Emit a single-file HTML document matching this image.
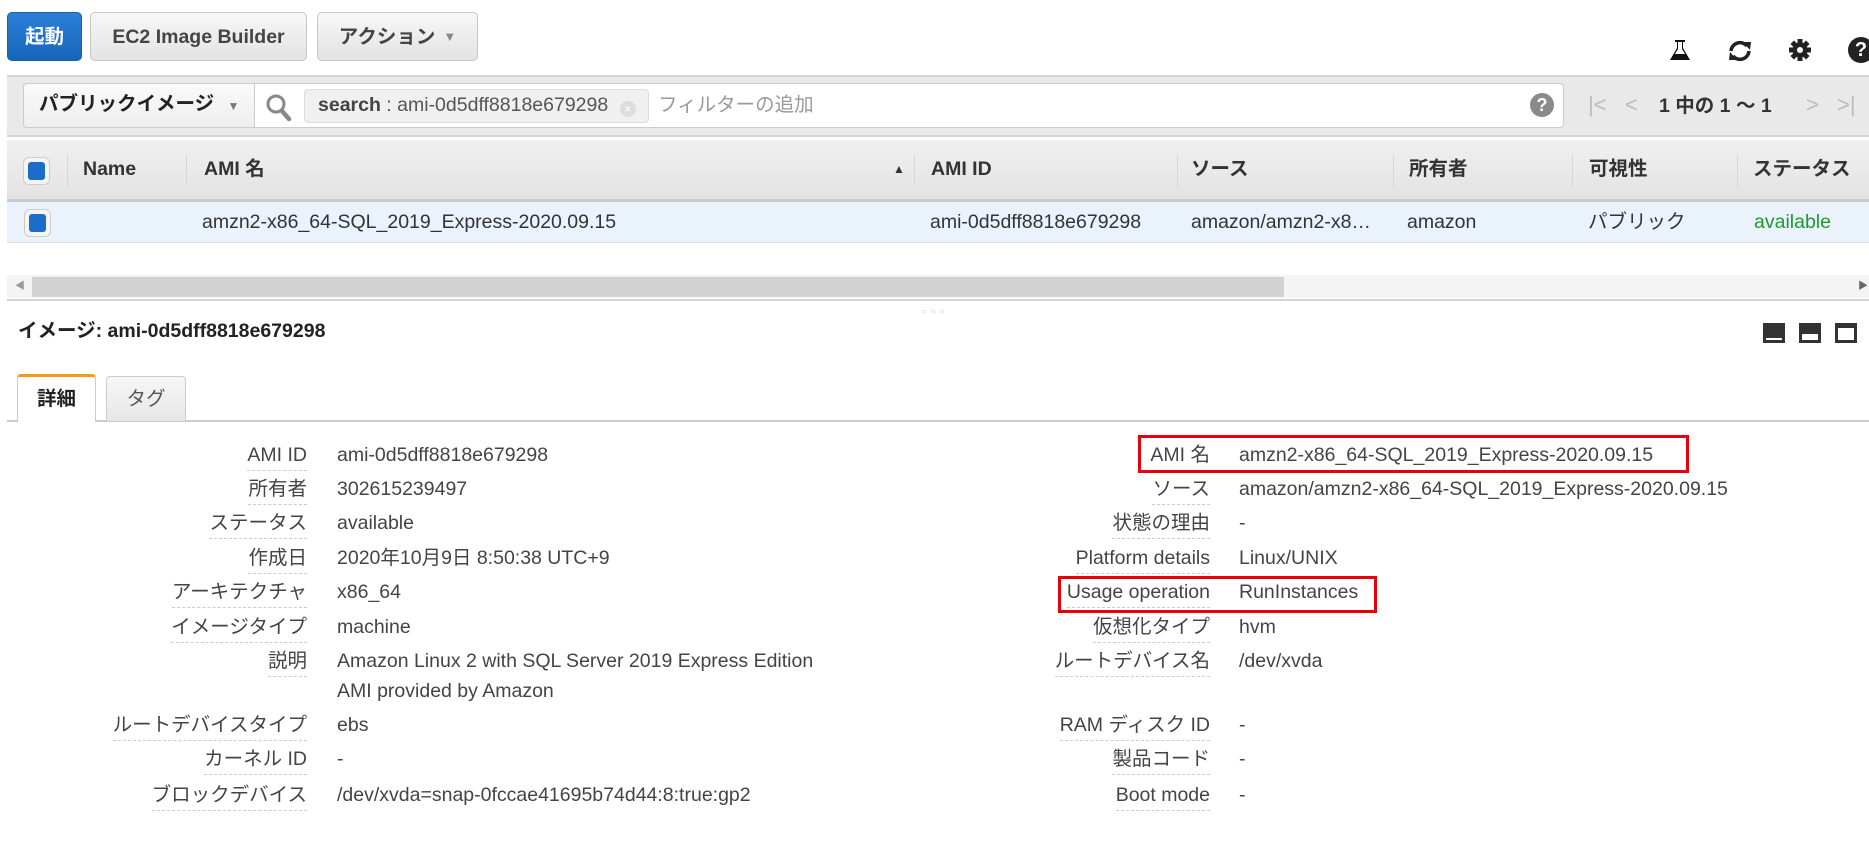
<!DOCTYPE html>
<html><head><meta charset="utf-8"><style>
*{box-sizing:border-box;margin:0;padding:0}
body{width:1869px;height:849px;position:relative;background:#fff;font-family:"Liberation Sans","Noto Sans CJK JP",sans-serif;font-size:19.5px;line-height:24px;color:#333;overflow:hidden}
.a{position:absolute;white-space:nowrap;line-height:24px}
.btn{position:absolute;top:12px;height:49px;border:1px solid #c8c8c8;border-radius:5px;background:linear-gradient(#f7f7f7,#e3e3e3);font-weight:bold;color:#444;display:flex;align-items:center;justify-content:center}
.cb{position:absolute;width:27px;height:28px;border:1px solid #ccc;border-radius:6px;background:#f4f4f4}
.cb::after{content:"";position:absolute;left:4px;top:4px;width:17px;height:18px;border-radius:3px;background:#1c6dc9}
.sep{position:absolute;top:155px;width:1px;height:32px;background:#d6d6d6}
.hl{position:absolute;top:157px;font-weight:bold;color:#333;line-height:24px;white-space:nowrap}
.lab{position:absolute;text-align:right;color:#444;border-bottom:1px dashed #ccc;line-height:24px;padding-bottom:3px;white-space:nowrap}
.val{position:absolute;color:#444;line-height:24px;white-space:nowrap}
.red{position:absolute;border:3px solid #e8000b}
</style></head><body>
<div class="btn" style="left:7px;width:75px;background:linear-gradient(#2b80d8,#1765b8);border-color:#1a5fab;color:#fff">起動</div>
<div class="btn" style="left:90px;width:217px">EC2 Image Builder</div>
<div class="btn" style="left:317px;width:161px">アクション <span style="font-size:13px;color:#888;margin-left:8px">▼</span></div>
<!-- top right icons -->
<svg class="a" style="left:1668px;top:38px" width="24" height="24" viewBox="0 0 24 24"><path d="M7 2h10v2h-2v6l7 12H2l7-12V4H7z" fill="#111"/><path d="M10 4h4v7l3 5H7l3-5z" fill="#fff"/></svg>
<svg class="a" style="left:1725px;top:38px" width="30" height="26" viewBox="0 0 30 26"><path d="M6 13a9 9 0 0 1 16-5" stroke="#222" stroke-width="3.5" fill="none"/><path d="M24 13a9 9 0 0 1-16 5" stroke="#222" stroke-width="3.5" fill="none"/><path d="M18 4l8 0-1 8z" fill="#222"/><path d="M12 22l-8 0 1-8z" fill="#222"/></svg>
<svg class="a" style="left:1788px;top:38px" width="24" height="24" viewBox="0 0 24 24"><g fill="#222"><circle cx="12" cy="12" r="7.5"/><rect x="9.5" y="1" width="5" height="22"/><rect x="1" y="9.5" width="22" height="5"/><rect x="9.5" y="1" width="5" height="22" transform="rotate(45 12 12)"/><rect x="9.5" y="1" width="5" height="22" transform="rotate(-45 12 12)"/></g><circle cx="12" cy="12" r="3" fill="#fff"/></svg>
<div class="a" style="left:1848px;top:37px;width:26px;height:26px;border-radius:50%;background:#222;color:#fff;font-weight:bold;font-size:20px;text-align:center;line-height:26px">?</div>
<!-- filter bar -->
<div class="a" style="left:7px;top:75px;width:1862px;height:62px;background:#e9e9e9;border-top:2px solid #d4d4d4;border-bottom:2px solid #d4d4d4"></div>
<div class="a" style="left:23px;top:83px;width:1541px;height:45px;background:#fff;border:1px solid #ccc;border-radius:4px"></div>
<div class="a" style="left:23px;top:83px;width:232px;height:45px;background:linear-gradient(#fafafa,#eee);border:1px solid #ccc;border-radius:4px 0 0 4px;font-weight:bold;color:#222;padding-left:15px;line-height:41px">パブリックイメージ <span style="font-size:12px;color:#777;margin-left:8px">▼</span></div>
<svg class="a" style="left:265px;top:93px" width="28" height="30" viewBox="0 0 28 30"><circle cx="11" cy="11" r="8" stroke="#888" stroke-width="3" fill="none"/><path d="M17 18l7 8" stroke="#888" stroke-width="4.5" stroke-linecap="round"/></svg>
<div class="a" style="left:304px;top:89px;width:345px;height:34px;background:#f0f0f0;border:1px solid #ddd;border-radius:4px;padding-left:13px;line-height:31px;color:#555"><b style="color:#444">search</b> : ami-0d5dff8818e679298 <span style="display:inline-block;width:16px;height:16px;border-radius:50%;background:#ddd;color:#fff;font-size:12px;text-align:center;line-height:16px;vertical-align:-2px;margin-left:6px">×</span></div>
<div class="a" style="left:658px;top:93px;color:#999">フィルターの追加</div>
<div class="a" style="left:1530px;top:93px;width:24px;height:24px;border-radius:50%;background:#8a8a8a;color:#fff;font-weight:bold;font-size:18px;text-align:center;line-height:24px">?</div>
<div class="a" style="left:1588px;top:93px;color:#bbb;font-size:22px">|&lt;</div>
<div class="a" style="left:1625px;top:93px;color:#bbb;font-size:22px">&lt;</div>
<div class="a" style="left:1659px;top:94px;color:#333;font-weight:bold">1 中の 1 ～ 1</div>
<div class="a" style="left:1806px;top:93px;color:#bbb;font-size:22px">&gt;</div>
<div class="a" style="left:1837px;top:93px;color:#bbb;font-size:22px">&gt;|</div>
<!-- table -->
<div class="a" style="left:7px;top:140px;width:1862px;height:62px;background:linear-gradient(#f0f0f0,#e3e3e3);border-bottom:3px solid #ccc"></div>
<div class="cb" style="left:23px;top:157px"></div>
<div class="sep" style="left:67px"></div><div class="sep" style="left:186px"></div><div class="sep" style="left:914px"></div><div class="sep" style="left:1177px"></div><div class="sep" style="left:1393px"></div><div class="sep" style="left:1572px"></div><div class="sep" style="left:1737px"></div>
<div class="hl" style="left:83px">Name</div>
<div class="hl" style="left:204px">AMI 名</div>
<div class="a" style="left:893px;top:157px;font-size:12px;color:#333">▲</div>
<div class="hl" style="left:931px">AMI ID</div>
<div class="hl" style="left:1191px">ソース</div>
<div class="hl" style="left:1409px">所有者</div>
<div class="hl" style="left:1589px">可視性</div>
<div class="hl" style="left:1753px">ステータス</div>
<div class="a" style="left:7px;top:202px;width:1862px;height:41px;background:#eaf2fc;border-bottom:1px solid #ddd"></div>
<div class="cb" style="left:24px;top:209px"></div>
<div class="a" style="left:202px;top:210px">amzn2-x86_64-SQL_2019_Express-2020.09.15</div>
<div class="a" style="left:930px;top:210px">ami-0d5dff8818e679298</div>
<div class="a" style="left:1191px;top:210px">amazon/amzn2-x8…</div>
<div class="a" style="left:1407px;top:210px">amazon</div>
<div class="a" style="left:1588px;top:210px">パブリック</div>
<div class="a" style="left:1754px;top:210px;color:#1d9a2a">available</div>
<!-- scrollbar -->
<div class="a" style="left:7px;top:275px;width:1862px;height:23px;background:#f4f4f4"></div>
<div class="a" style="left:32px;top:277px;width:1252px;height:20px;background:#d2d2d2"></div>
<div class="a" style="left:15px;top:275px;font-size:10px;color:#999">◀</div>
<div class="a" style="left:1858px;top:275px;font-size:10px;color:#666">▶</div>
<div class="a" style="left:7px;top:299px;width:1862px;height:2px;background:#d4d4d4"></div>
<div class="a" style="left:922px;top:300px;font-size:8px;color:#bbb;letter-spacing:4px">○○○</div>
<!-- detail -->
<div class="a" style="left:18px;top:319px;font-weight:bold;color:#222">イメージ: ami-0d5dff8818e679298</div>
<svg class="a" style="left:1763px;top:323px" width="96" height="22" viewBox="0 0 96 22"><rect x="0" y="0" width="22" height="20" fill="#333"/><rect x="3" y="15" width="16" height="2" fill="#fff"/><rect x="36" y="0" width="22" height="20" fill="#333"/><rect x="39" y="11" width="16" height="6" fill="#fff"/><rect x="72" y="0" width="22" height="20" fill="#333"/><rect x="75" y="5" width="16" height="12" fill="#fff"/></svg>
<div class="a" style="left:7px;top:420px;width:1862px;height:2px;background:#ccc"></div>
<div class="a" style="left:17px;top:374px;width:79px;height:48px;background:#fff;border:1px solid #ccc;border-top:3px solid #f39b16;border-bottom:none;border-radius:4px 4px 0 0;font-weight:bold;color:#222;text-align:center;line-height:44px">詳細</div>
<div class="a" style="left:106px;top:376px;width:80px;height:45px;background:linear-gradient(#f7f7f7,#e6e6e6);border:1px solid #ccc;border-bottom:none;border-radius:4px 4px 0 0;color:#555;text-align:center;line-height:44px">タグ</div>

<div class="lab" style="right:1562px;top:443px">AMI ID</div><div class="val" style="left:337px;top:443px">ami-0d5dff8818e679298</div>
<div class="lab" style="right:1562px;top:477px">所有者</div><div class="val" style="left:337px;top:477px">302615239497</div>
<div class="lab" style="right:1562px;top:511px">ステータス</div><div class="val" style="left:337px;top:511px">available</div>
<div class="lab" style="right:1562px;top:546px">作成日</div><div class="val" style="left:337px;top:546px">2020年10月9日 8:50:38 UTC+9</div>
<div class="lab" style="right:1562px;top:580px">アーキテクチャ</div><div class="val" style="left:337px;top:580px">x86_64</div>
<div class="lab" style="right:1562px;top:615px">イメージタイプ</div><div class="val" style="left:337px;top:615px">machine</div>
<div class="lab" style="right:1562px;top:649px">説明</div><div class="val" style="left:337px;top:649px">Amazon Linux 2 with SQL Server 2019 Express Edition</div>
<div class="val" style="left:337px;top:679px">AMI provided by Amazon</div>
<div class="lab" style="right:1562px;top:713px">ルートデバイスタイプ</div><div class="val" style="left:337px;top:713px">ebs</div>
<div class="lab" style="right:1562px;top:747px">カーネル ID</div><div class="val" style="left:337px;top:747px">-</div>
<div class="lab" style="right:1562px;top:783px">ブロックデバイス</div><div class="val" style="left:337px;top:783px">/dev/xvda=snap-0fccae41695b74d44:8:true:gp2</div>

<div class="lab" style="right:659px;top:443px">AMI 名</div><div class="val" style="left:1239px;top:443px">amzn2-x86_64-SQL_2019_Express-2020.09.15</div>
<div class="lab" style="right:659px;top:477px">ソース</div><div class="val" style="left:1239px;top:477px">amazon/amzn2-x86_64-SQL_2019_Express-2020.09.15</div>
<div class="lab" style="right:659px;top:511px">状態の理由</div><div class="val" style="left:1239px;top:511px">-</div>
<div class="lab" style="right:659px;top:546px">Platform details</div><div class="val" style="left:1239px;top:546px">Linux/UNIX</div>
<div class="lab" style="right:659px;top:580px">Usage operation</div><div class="val" style="left:1239px;top:580px">RunInstances</div>
<div class="lab" style="right:659px;top:615px">仮想化タイプ</div><div class="val" style="left:1239px;top:615px">hvm</div>
<div class="lab" style="right:659px;top:649px">ルートデバイス名</div><div class="val" style="left:1239px;top:649px">/dev/xvda</div>
<div class="lab" style="right:659px;top:713px">RAM ディスク ID</div><div class="val" style="left:1239px;top:713px">-</div>
<div class="lab" style="right:659px;top:747px">製品コード</div><div class="val" style="left:1239px;top:747px">-</div>
<div class="lab" style="right:659px;top:783px">Boot mode</div><div class="val" style="left:1239px;top:783px">-</div>

<div class="red" style="left:1138px;top:435px;width:551px;height:38px"></div>
<div class="red" style="left:1058px;top:576px;width:319px;height:37px"></div>
</body></html>
